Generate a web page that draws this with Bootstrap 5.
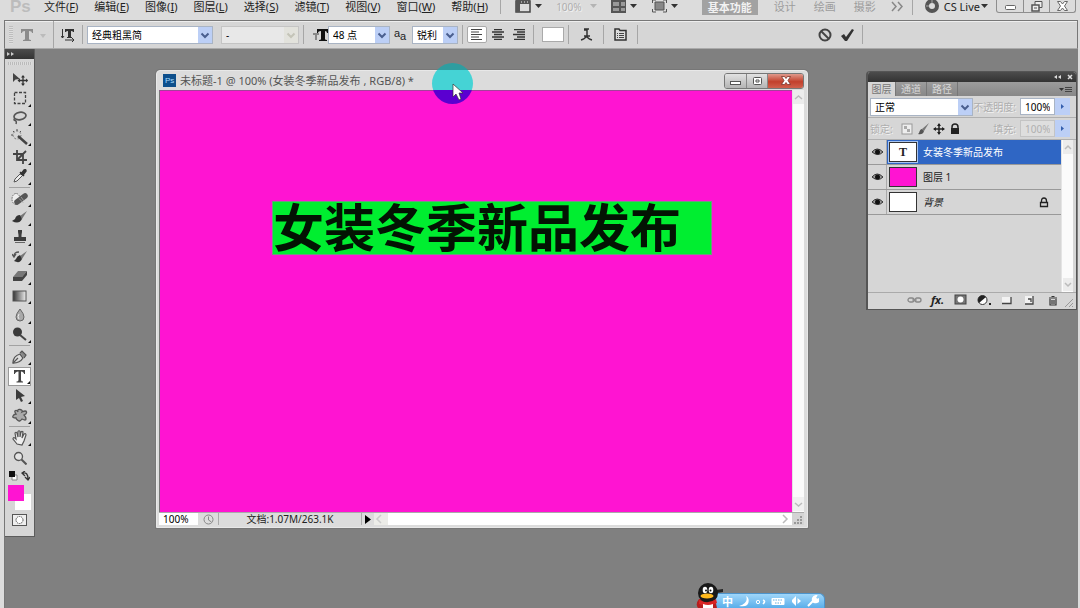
<!DOCTYPE html>
<html lang="zh-CN">
<head>
<meta charset="utf-8">
<meta name="viewport" content="width=device-width, initial-scale=1">
<title>未标题-1</title>
<link href="https://cdn.jsdelivr.net/npm/bootstrap@5.3.0/dist/css/bootstrap.min.css" rel="stylesheet">
<style>
:root{--face:#d6d6d6;--line:#8c8c8c;--ink:#222;--pink:#ff14d2}
html,body{height:100%}
body{font-family:"Noto Sans","Noto Sans CJK SC",sans-serif;font-size:11px;line-height:14px;color:var(--ink);background:#dcdcdc;overflow:hidden}
button{border:0;background:none;padding:0;color:inherit;font:inherit;line-height:inherit;white-space:nowrap}
svg{display:block;flex:none}
select,input{font:inherit;font-size:10px;color:#000;border:1px solid #a9b4c4;border-radius:0;background-color:#fff;padding:0 4px;min-width:0}
select{appearance:none;background-repeat:no-repeat;background-position:right 0 center;background-image:url("data:image/svg+xml,%3Csvg xmlns='http://www.w3.org/2000/svg' width='14' height='16'%3E%3Crect width='14' height='16' fill='%23bccff6'/%3E%3Cpath d='M3.500 6.500l3.500 3.500 3.500-3.500' fill='none' stroke='%234a5f8f' stroke-width='2'/%3E%3C/svg%3E")}
select:disabled{opacity:1;background-color:#e8e8e8;border-color:#c4c4c4;background-image:url("data:image/svg+xml,%3Csvg xmlns='http://www.w3.org/2000/svg' width='14' height='16'%3E%3Crect width='14' height='16' fill='%23e2e2dc'/%3E%3Cpath d='M3.500 6.500l3.500 3.500 3.500-3.500' fill='none' stroke='%23c4c4b8' stroke-width='2'/%3E%3C/svg%3E")}
.menubar{height:20px;padding-left:10px;padding-right:4px}
.app-logo{font:700 17px/14px "Liberation Sans",sans-serif;width:34px;color:#bcbcbc}
.menu-set{gap:16px}
.view-set{gap:14px;margin-left:12px}
.zoom-pick{font-size:10px}
.menubar button{height:14px}
.vline{width:1px;background:#a6a6a6;align-self:stretch;flex:none}
.mode{color:#9d9d9d;width:20px}
.mode-on{background:#a2a2a2;color:#f2f2f2;width:56px;font-weight:700}
.menubar .mode-on{height:15px}
.sysbox{border:1px solid #8e8e8e;border-top:0;border-radius:0 0 3px 3px;height:13px}
.sysbox button{width:26px;height:12px;display:flex;justify-content:center;align-items:center}
.sysbox button+button{border-left:1px solid #8e8e8e}
.optbar{height:29px;margin-left:4px;margin-right:2px;border:1px solid #777;border-bottom-color:#aaa;background:var(--face);box-shadow:inset 0 1px #eee}
.optbar select{height:18px}
.slot{display:flex;align-items:center;justify-content:center;flex:none}
.grip{width:4px;height:18px;background:repeating-linear-gradient(#bdbdbd 0 1px,#dedede 1px 2px)}
.align-on{background:#fff;border:1px solid #aaa;border-radius:2px}
.ink-box{width:22px;height:15px;background:#fff;border:1px solid #aaa}
.desk{background:#808080;margin-left:4px;margin-right:2px;border-left:1px solid #777}
/* tool palette */
.palette{width:30px;height:488px;background:var(--face);border-right:1px solid #5c5c5c;border-bottom:1px solid #5c5c5c}
.dark-head{background:linear-gradient(#4c4c4c,#333);color:#ccc}
.palette .dark-head{height:10px;padding-left:2px}
.hgrip{width:24px;height:3px;margin:3px auto 4px;background:repeating-linear-gradient(90deg,#bbb 0 1px,#ddd 1px 2px)}
.tools{padding:0 3px}
.tools button{height:19px;width:23px;display:flex;align-items:center;justify-content:center;position:relative}
.tools button.fly::after{content:"";position:absolute;right:0;bottom:1px;border-left:3px solid transparent;border-bottom:3px solid #111}
.tools button.tool-on{background:#fff;border:1px solid #999}
.t6{height:117px}.t8{height:155px}.t4{height:78px}.t2{height:39px}
.hline{height:1px;background:#a2a2a2;margin:1px 4px 1px}
.swatches{height:25px;position:relative;margin:0 3px}
.swatches button{position:absolute;width:16px;height:16px}
.fore{background:var(--pink);left:0;top:0;z-index:1}
.back{background:#fff;right:0;bottom:0}
/* document window */
.docwin{left:151px;top:21px;width:652px;height:458px;background:#dcdcdc;border:1px solid #e8e8e8;border-radius:4px 4px 0 0;box-shadow:0 0 0 1px #777;padding:0 3px 2px 2px}
.titlebar{height:19px;color:#555}
.caption-set{border:1px solid #777;border-radius:3px;height:16px;overflow:hidden}
.caption-set button{width:21px;display:flex;align-items:center;justify-content:center;background:linear-gradient(#e2e2e2,#b4b4b4)}
.caption-set button+button{border-left:1px solid #888}
.caption-set .shut{width:36px;background:linear-gradient(#e0998c,#c2402c 55%,#d0604c)}
.canvas-area{background:var(--pink);border-left:1px solid #777;border-top:1px solid #a3419a}
.vscroll{width:12px;background:#fbfbfb;border-left:1px solid #e4e4e4}
.headline{margin:111px 81px 0 113px;background:#00ee30;outline:1px solid #6d9b80;height:52px;font:700 51px/46px "Noto Sans CJK SC",sans-serif;color:#031303;white-space:nowrap}
.status{height:13px;font-size:10px;line-height:13px;border-top:1px solid #aaa}
.status input{width:39px;border:0;height:12px}
.status .doc-size{width:144px;border-left:1px solid #aaa;border-right:1px solid #aaa}
/* layers */
.layers{right:1px;top:22px;width:211px;height:239px;background:var(--face);border:1px solid #555;border-left-width:2px;border-radius:4px 4px 0 0;overflow:hidden}
.layers .dark-head{height:10px;padding-right:3px;gap:5px}
.tabs{height:14px;background:linear-gradient(#9c9c9c,#878787);font-size:10px;line-height:14px}
.tabs button{width:31px;color:#d8d8d8;border-right:1px solid #777}
.tabs .tab-on{background:var(--face);color:#777;width:28px}
.prow{height:22px;border-bottom:1px solid #b0b0b0;padding:0 6px 0 2px;font-size:10px}
.prow input{height:17px;width:35px}
.prow input:disabled{background:#dedede;color:#b0b0b0;border-color:#c4c4c4}
.dim{color:#aeaeae;text-shadow:1px 1px #f2f2f2}
.step{width:15px;height:17px;background:#bccff6;display:flex;align-items:center;justify-content:center}
.layer-list{padding-right:3px}
.layer-row{height:25px;border-bottom:1px solid #999;font-size:10px;padding-right:12px}
.layer-row .eye{width:19px;height:24px;border-right:1px solid #aaa;background:var(--face);display:flex;align-items:center;justify-content:center}
.layer-row.picked{background:#2f66c4;color:#fff}
.thumb{width:28px;height:20px;border:1px solid #333;background:#fff;margin:0 6px 0 2px;color:#222;font:700 12px/18px "Liberation Serif",serif;text-align:center}
.thumb-pink{background:var(--pink)}
.picked .thumb{outline:1px solid #a8c4f0}
.lfoot{height:17px;border-top:1px solid #aaa;padding-right:2px}
.lfoot button{width:23px;height:14px;display:flex;align-items:center;justify-content:center}
/* overlay items */
.halo{left:427px;top:14px;width:41px;height:41px;border-radius:50%;background:linear-gradient(#2f9da0 0 7px,#45d3d5 7px 27px,#5a00d0 27px)}
.pointer{left:447px;top:34px}
.ime{left:691px;bottom:0;height:26px}
.ime-bar{height:15px;width:113px;margin-left:-12px;padding:0 5px 0 9px;border-radius:6px 6px 0 0;background:linear-gradient(#9fd6fa,#5aaeea);border:1px solid #4c94cc;border-bottom:0;color:#fff}
.ime-bar button{height:13px;line-height:13px;font-weight:700}
</style>
</head>
<body class="d-flex flex-column">
<header class="flex-shrink-0">
 <nav class="menubar d-flex align-items-start">
  <span class="app-logo">Ps</span>
  <div class="menu-set d-flex">
   <button>文件(<u>F</u>)</button><button>编辑(<u>E</u>)</button><button>图像(<u>I</u>)</button><button>图层(<u>L</u>)</button><button>选择(<u>S</u>)</button><button>滤镜(<u>T</u>)</button><button>视图(<u>V</u>)</button><button>窗口(<u>W</u>)</button><button>帮助(<u>H</u>)</button>
  </div>
  <div class="view-set d-flex">
   <span class="vline"></span>
   <button class="slot" aria-label="Bridge"><svg width="27" height="14"><path d="M1 1h14v11H1z" fill="#ddd" stroke="#444" stroke-width="1.500"/><path d="M1 0h14v4H1zM1 4h4v8H1z" fill="#555"/><path d="M6 2h1M9 2h1M12 2h1" stroke="#eee"/><path d="M20 4h7l-3.500 4z" fill="#333"/></svg></button>
   <button class="slot dim zoom-pick" disabled>100% <svg class="ms-2" width="7" height="14"><path d="M0 4h7l-3.500 4z" fill="#b4b4b4"/></svg></button>
   <button class="slot" aria-label="排列文档"><svg width="27" height="14"><path d="M0 0h15v13H0z" fill="#555"/><path d="M2 2h6v4H2zM2 8h6v3H2zM10 2h4v4h-4zM10 8h4v3h-4z" fill="#999"/><path d="M19 4h7l-3.500 4z" fill="#333"/></svg></button>
   <button class="slot" aria-label="屏幕模式"><svg width="27" height="14"><path d="M3 2h9v8H3z" fill="#888" stroke="#555"/><path d="M.5 3V0H4M11 0h3.500v3M.5 9v3H4M11 12h3.500V9" fill="none" stroke="#555"/><path d="M19 4h7l-3.500 4z" fill="#333"/></svg></button>
  </div>
  <div class="d-flex ms-auto align-items-start">
   <button class="mode-on">基本功能</button>
   <button class="mode ms-3">设计</button><button class="mode ms-3 px-1">绘画</button><button class="mode ms-4">摄影</button>
   <button class="ms-3" aria-label="更多"><svg width="14" height="14"><path d="M2 2l4 4.500L2 11M8 2l4 4.500L8 11" fill="none" stroke="#888" stroke-width="1.500"/></svg></button>
   <span class="vline ms-2 me-2"></span>
   <button class="d-flex ms-1" ><svg class="me-1" width="15" height="14"><circle cx="7" cy="6" r="5" fill="none" stroke="#555" stroke-width="4"/><path d="M7 0v3M1 6h3" stroke="#aaa"/></svg>CS Live<svg width="8" height="14"><path d="M1 4h7l-3.500 4z" fill="#333"/></svg></button>
   <div class="sysbox d-flex ms-2">
    <button aria-label="最小化"><svg width="11" height="8"><rect x=".5" y="3.500" width="10" height="4" rx="1" fill="#fff" stroke="#666"/></svg></button>
    <button aria-label="还原"><svg width="12" height="11"><path d="M4 .5h7v6H4z" fill="#eee" stroke="#555"/><path d="M1 4h7v6H1z" fill="#eee" stroke="#555" stroke-width="1.500"/><path d="M3 7h3" stroke="#555"/></svg></button>
    <button aria-label="关闭"><svg width="11" height="10"><path d="M.5 .5h3l2 2.500 2-2.500h3L7.500 5l3 4.500h-3l-2-2.500-2 2.500h-3l3-4.500z" fill="#fff" stroke="#666"/></svg></button>
   </div>
  </div>
 </nav>
 <div class="optbar d-flex align-items-center">
  <span class="grip ms-1"></span>
  <button class="slot" style="width:40px" aria-label="文字工具预设"><svg width="28" height="16"><path d="M2 2h12v4h-1q0-2-3-2v8q0 1 2 1v1H4v-1q2 0 2-1V4Q3 4 3 6H2z" fill="#8b8b8b"/><path d="M21 7h6l-3 4z" fill="#bbb"/></svg></button>
  <span class="vline"></span>
  <button class="slot" style="width:28px" aria-label="切换文本方向"><svg width="14" height="14"><path d="M4 1h9v3h-1q0-1-2-1v6h1v1H6V9h1V3Q5 3 5 4H4z" fill="#333"/><path d="M1.500 1v9M0 8l1.500 2L3 8M4 12h9M11 10l2 2-2 2" fill="none" stroke="#333"/></svg></button>
  <span class="vline my-1"></span>
  <select class="ms-1" style="width:126px" aria-label="字体"><option>经典粗黑简</option></select>
  <select class="ms-2" style="width:78px" aria-label="字体样式" disabled><option>-</option></select>
  <span class="vline my-1 ms-1"></span>
  <span class="slot ms-2" style="width:16px"><svg width="15" height="14"><path d="M4 1h11v4h-1q0-2-2-2v8q0 1 2 1v1H6v-1q2 0 2-1V3Q5 3 5 5H4z" fill="#111"/><path d="M0 5h6v2H4v5H2V7H0z" fill="#888"/></svg></span>
  <select style="width:62px" aria-label="字体大小"><option>48 点</option></select>
  <span class="slot" style="width:22px"><svg width="14" height="18"><text x="0" y="11" font-family="Liberation Sans" font-size="11" fill="#222">a</text><text x="6" y="14" font-family="Liberation Sans" font-size="11" fill="#222">a</text></svg></span>
  <select style="width:46px" aria-label="消除锯齿"><option>锐利</option></select>
  <span class="vline my-1 ms-1"></span>
  <button class="slot align-on ms-1" style="width:20px;height:17px" aria-label="左对齐"><svg width="12" height="11"><path d="M0 .5h11M0 3h8M0 5.500h11M0 8h8M0 10.500h11" stroke="#444"/></svg></button>
  <button class="slot" style="width:21px" aria-label="居中"><svg width="12" height="11"><path d="M2 .5h8M0 3h12M2 5.500h8M0 8h12M2 10.500h8" stroke="#333" stroke-width="1.500"/></svg></button>
  <button class="slot" style="width:21px" aria-label="右对齐"><svg width="12" height="11"><path d="M1 .5h11M4 3h8M0 5.500h12M4 8h8M1 10.500h11" stroke="#333" stroke-width="1.500"/></svg></button>
  <span class="vline my-1 ms-1 me-1"></span>
  <button class="ink-box ms-1 me-1" aria-label="文本颜色"></button>
  <span class="vline my-1"></span>
  <button class="slot" style="width:34px" aria-label="变形文字"><svg width="13" height="13"><path d="M4 2h3v6M4 8h6M6.500 8Q5 11 1 12M6.500 8Q8 11 12 12M4 1h5" fill="none" stroke="#333" stroke-width="1.500"/></svg></button>
  <span class="vline my-1"></span>
  <button class="slot" style="width:33px" aria-label="字符面板"><svg width="13" height="13"><path d="M1 3V1h4l1 1.500h6V12H1z" fill="#ddd" stroke="#333" stroke-width="1.500"/><path d="M3 5.500h1M3 7.500h1M3 9.500h1M5 5.500h5M5 7.500h5M5 9.500h5" stroke="#444"/></svg></button>
  <span class="vline my-1"></span>
  <div class="ms-auto d-flex align-items-center align-self-stretch" style="padding-right:214px">
   <button class="me-2" aria-label="取消"><svg width="14" height="14"><circle cx="7" cy="7" r="5.500" fill="none" stroke="#444" stroke-width="2"/><path d="M3 3l8 8" stroke="#444" stroke-width="2"/></svg></button>
   <button class="me-2" aria-label="提交"><svg width="14" height="14"><path d="M1 8l3-2 2 3 6-8 2 1-7 11H5z" fill="#333"/></svg></button>
   <span class="vline my-1"></span>
  </div>
 </div>
</header>
<main class="desk flex-fill position-relative overflow-hidden">
 <aside class="palette">
  <div class="dark-head d-flex align-items-center"><svg width="8" height="6"><path d="M0 1l3 2-3 2zM4 1l3 2-3 2z" fill="#ccc"/></svg></div>
  <div class="hgrip"></div>
  <div class="tools t6 d-flex flex-column justify-content-between">
   <button aria-label="移动"><svg width="16" height="14"><path d="M1 1v9l2.500-2.500L8 7z" fill="#444"/><path d="M11 4v9M6.500 8.500h9" stroke="#333" stroke-width="1.300"/><path d="M9 5.500L11 3l2 2.500zM9 11.500l2 2.500 2-2.500zM8 6.500L5.500 8.500 8 10.500zM14 6.500l2 2-2 2z" fill="#333"/></svg></button>
   <button class="fly" aria-label="选框"><svg width="14" height="14"><rect x="1.500" y="1.500" width="11" height="11" fill="none" stroke="#444" stroke-width="1.300" stroke-dasharray="3 1.500"/></svg></button>
   <button class="fly" aria-label="套索"><svg width="15" height="14"><ellipse cx="8" cy="5" rx="6" ry="3.700" transform="rotate(-10 8 5)" fill="none" stroke="#555" stroke-width="1.700"/><path d="M3 7q-2 2 0 2.500t1 3.500" fill="none" stroke="#555" stroke-width="1.500"/></svg></button>
   <button class="fly" aria-label="魔棒"><svg width="17" height="17"><circle cx="6" cy="6" r="4" fill="none" stroke="#777" stroke-dasharray="2 1.500"/><path d="M6 0v2M0 6h2M2 2l1 1M10 2l-1 1" stroke="#555"/><path d="M7 7l9 8" stroke="#444" stroke-width="2.500"/></svg></button>
   <button class="fly" aria-label="裁剪"><svg width="14" height="14"><path d="M4 0v10h10M0 4h10v10M4 10l9-9" fill="none" stroke="#444" stroke-width="1.800"/></svg></button>
   <button class="fly" aria-label="吸管"><svg width="14" height="14"><path d="M1 13l1-3 6-6 2 2-6 6z" fill="#eee" stroke="#555"/><path d="M7 3l4 4M8 5l3-4q2-1 2 1L10 6z" fill="#333" stroke="#333" stroke-width="1.500"/></svg></button>
  </div>
  <div class="hline"></div>
  <div class="tools t8 d-flex flex-column justify-content-between">
   <button class="fly" aria-label="修复"><svg width="18" height="14"><ellipse cx="5" cy="7" rx="4" ry="5.500" fill="#eee" stroke="#666" stroke-dasharray="1.500 1"/><path d="M6 10l8-6" stroke="#555" stroke-width="5.500" stroke-linecap="round"/><path d="M8 6.500l4 4M10 5l3 4" stroke="#999"/></svg></button>
   <button class="fly" aria-label="画笔"><svg width="16" height="13"><path d="M15 0L8 5l2 3z" fill="#777"/><path d="M8 4q-4 0-5 4l-3 2q7 4 10-2z" fill="#333"/></svg></button>
   <button class="fly" aria-label="图章"><svg width="14" height="14"><path d="M5 0h4v2L8.500 5v2H13v4H1V7h4.500V5L5 2z" fill="#3c3c3c"/><path d="M2 12.500h10" stroke="#666"/></svg></button>
   <button class="fly" aria-label="历史画笔"><svg width="16" height="14"><path d="M15 1L8 6l2 3z" fill="#777"/><path d="M8 5q-3 1-4 4l-2 2q6 3 8-2z" fill="#333"/><path d="M2 6q0-4 5-4M0 4l2 3 2-3" fill="none" stroke="#555" stroke-width="1.300"/></svg></button>
   <button class="fly" aria-label="橡皮"><svg width="16" height="12"><path d="M6 1h9L10 7H1z" fill="#777"/><path d="M1 7h9v4H1zM10 7l5-6v4l-5 6z" fill="#444"/></svg></button>
   <button class="fly" aria-label="渐变"><svg width="16" height="12"><defs><linearGradient id="grad"><stop stop-color="#333"/><stop offset="1" stop-color="#eee"/></linearGradient></defs><rect x="1" y="1" width="13" height="10" fill="url(#grad)" stroke="#555"/></svg></button>
   <button class="fly" aria-label="模糊"><svg width="12" height="14"><path d="M6 1Q2 6 2 9a4 4 0 0 0 8 0Q10 6 6 1z" fill="#a9a9a9" stroke="#666"/><path d="M5 6q-2 3 0 5" stroke="#eee" fill="none"/></svg></button>
   <button class="fly" aria-label="减淡"><svg width="15" height="14"><circle cx="5.500" cy="5" r="4.500" fill="#3a3a3a"/><path d="M8 8l6 5" stroke="#444" stroke-width="2"/></svg></button>
  </div>
  <div class="hline"></div>
  <div class="tools t4 d-flex flex-column justify-content-between">
   <button class="fly" aria-label="钢笔"><svg width="15" height="14"><path d="M1 13q0-7 7-9l3 4q-3 5-10 5z" fill="#ddd" stroke="#555" stroke-width="1.300"/><path d="M1 13l5-5M8 3l2-2 4 4-2 3" stroke="#555" fill="#888" stroke-width="1.200"/></svg></button>
   <button class="fly tool-on" aria-label="文字"><svg width="13" height="14"><path d="M1 1h11v4h-1q0-2-3-2.500V11q0 1.500 2 1.500v1H3.500v-1q2 0 2-1.500V2.500Q2 3 2 5H1z" fill="#444"/></svg></button>
   <button class="fly" aria-label="路径选择"><svg width="12" height="14"><path d="M2 0v11l3-2 2 4 2-1-2-4 4-1z" fill="#3c3c3c"/></svg></button>
   <button class="fly" aria-label="形状"><svg width="16" height="14"><path d="M6 4Q5 1 8 1.500T10 4q4-2 4.500 0T12 7q2 2 2 4t-4 0q-2 3-4 1.500T4 10q-4 0-3-2t3-2Q2 3 3.500 2.500T6 4z" fill="#aaa" stroke="#555" stroke-width="1.300"/></svg></button>
  </div>
  <div class="hline"></div>
  <div class="tools t2 d-flex flex-column justify-content-between">
   <button class="fly" aria-label="抓手"><svg width="16" height="16"><path d="M5 14L1 9q0-2 2-1l1 1-1-6q1-1.500 2 0l1 4V1.500q1-1.500 2 0V7l1-5q1-1 2 0l-1 6 2-4q2-1 2 1l-2 6-2 4z" fill="#eee" stroke="#555" stroke-width="1.200"/></svg></button>
   <button aria-label="缩放"><svg width="14" height="14"><circle cx="5.500" cy="5.500" r="4" fill="#e4e4e4" stroke="#555" stroke-width="1.300"/><path d="M8.500 8.500l5 5" stroke="#555" stroke-width="2"/></svg></button>
  </div>
  <div class="d-flex justify-content-between px-1 pt-1 pb-1">
   <button aria-label="默认颜色"><svg width="9" height="10"><path d="M3 4h5v5H3z" fill="#fff" stroke="#888"/><path d="M0 0h6v6H0z" fill="#111"/></svg></button>
   <button aria-label="切换颜色"><svg width="9" height="10"><path d="M2 2q5-1 5 6M4 0L1 2l3 3M4 6l3 3 2-3" fill="none" stroke="#333" stroke-width="1.300"/></svg></button>
  </div>
  <div class="swatches"><button class="fore" aria-label="前景色"></button><button class="back" aria-label="背景色"></button></div>
  <div class="d-flex justify-content-center pt-1"><button aria-label="快速蒙版"><svg width="15" height="13"><rect x=".5" y=".5" width="14" height="11" fill="#eee" stroke="#555"/><circle cx="7.500" cy="6" r="3.500" fill="#fff" stroke="#555" stroke-dasharray="1.500 .7"/></svg></button></div>
 </aside>

 <section class="docwin position-absolute d-flex flex-column">
  <div class="titlebar d-flex align-items-center flex-shrink-0">
   <svg class="ms-1 me-1" width="13" height="13"><rect width="13" height="13" fill="#0d4f8c"/><text x="2" y="9" font-family="Liberation Sans" font-size="8" fill="#a8dcff">Ps</text></svg>
   <span class="text-nowrap">未标题-1 @ 100% (女装冬季新品发布 , RGB/8) *</span>
   <div class="caption-set d-flex ms-auto">
    <button aria-label="最小化"><svg width="11" height="10"><rect x=".5" y="5.500" width="10" height="3" fill="#fff" stroke="#555"/></svg></button>
    <button aria-label="最大化"><svg width="11" height="10"><rect x="1.500" y="1.500" width="8" height="7" rx="1" fill="#fff" stroke="#555"/><path d="M4 4h3v2H4z" fill="#fff" stroke="#555"/></svg></button>
    <button class="shut" aria-label="关闭"><svg width="10" height="9"><path d="M.5 .5h3l1.500 2 1.500-2h3L7 4.500l2.500 4h-3L5 6.500l-1.500 2h-3L3 4.500z" fill="#fff" stroke="#7a3328" stroke-width=".8"/></svg></button>
   </div>
  </div>
  <div class="d-flex flex-fill">
   <div class="canvas-area flex-fill"><div class="headline">女装冬季新品发布</div></div>
   <div class="vscroll d-flex flex-column justify-content-between align-items-center">
    <svg width="11" height="15"><path d="M0 0h11v14H0z" fill="#ececec"/><path d="M2 9l3.500-3L9 9" fill="none" stroke="#bbb" stroke-width="1.500"/></svg>
    <svg width="11" height="15"><path d="M0 0h11v14H0z" fill="#f0f0f0"/><path d="M2 6l3.500 3L9 6" fill="none" stroke="#bbb" stroke-width="1.500"/></svg>
   </div>
  </div>
  <div class="status d-flex flex-shrink-0">
   <input aria-label="缩放比例" value="100%">
   <button class="slot" style="width:20px" aria-label="信息"><svg width="11" height="11"><circle cx="5.500" cy="5.500" r="4.500" fill="#ddd" stroke="#888"/><path d="M5.500 2.500v3.500l3 2" fill="none" stroke="#888"/></svg></button>
   <span class="doc-size text-center text-nowrap">文档:1.07M/263.1K</span>
   <button class="slot" style="width:12px" aria-label="状态选项"><svg width="6" height="9"><path d="M0 0v9l6-4.500z" fill="#000"/></svg></button>
   <div class="flex-fill bg-white d-flex justify-content-between">
    <svg width="14" height="12"><path d="M0 0h14v12H0z" fill="#ecece8"/><path d="M7 2L3 6l4 4" fill="none" stroke="#ccc" stroke-width="1.500"/></svg>
    <svg width="14" height="12"><path d="M5 2l4 4-4 4" fill="none" stroke="#bbb" stroke-width="1.500"/></svg>
   </div>
   <svg width="12" height="12"><path d="M0 0h12v12H0z" fill="#d4d4d4"/><path d="M2 10h9M5 7h6M8 4h3" stroke="#999" stroke-width="2" stroke-dasharray="2 1"/></svg>
  </div>
 </section>

 <aside class="layers position-absolute d-flex flex-column">
  <div class="dark-head d-flex align-items-center justify-content-end flex-shrink-0"><svg width="8" height="6"><path d="M3 1L0 3l3 2zM7 1L4 3l3 2z" fill="#ddd"/></svg><svg width="6" height="6"><path d="M1 1l4 4M5 1L1 5" stroke="#ddd" stroke-width="1.500"/></svg></div>
  <div class="tabs d-flex flex-shrink-0"><button class="tab-on">图层</button><button>通道</button><button>路径</button><button class="ms-auto border-0 d-flex justify-content-end pe-1" aria-label="面板菜单"><svg width="13" height="14"><path d="M0 6h5l-2.500 3z" fill="#333"/><path d="M6 5.500h7M6 7.500h7M6 9.500h7" stroke="#444"/></svg></button></div>
  <div class="prow d-flex align-items-center flex-shrink-0"><select style="width:103px;height:18px" aria-label="混合模式"><option>正常</option></select><label class="dim ms-auto me-1 text-nowrap" for="opac">不透明度:</label><input id="opac" value="100%"><button class="step" aria-label="不透明度滑块"><svg width="5" height="7"><path d="M1 1l3 2.500L1 6z" fill="#345fae"/></svg></button></div>
  <div class="prow d-flex align-items-center flex-shrink-0"><span class="dim me-2">锁定:</span>
   <button class="me-1" aria-label="锁定透明像素"><svg width="12" height="12"><rect x="1" y="1" width="10" height="10" fill="#eee" stroke="#999"/><path d="M3 3h3v3H3zM6 6h3v3H6z" fill="#aaa"/></svg></button>
   <button class="me-1" aria-label="锁定图像像素"><svg width="12" height="12"><path d="M12 0L5 6l2 2z" fill="#777"/><path d="M5 6q-2 0-3 4l-1 1q5 1 6-3z" fill="#555"/></svg></button>
   <button class="me-1" aria-label="锁定位置"><svg width="12" height="12"><path d="M6 1v10M1 6h10" stroke="#222" stroke-width="1.500"/><path d="M4 3l2-3 2 3zM4 9l2 3 2-3zM3 4L0 6l3 2zM9 4l3 2-3 2z" fill="#222"/></svg></button>
   <button aria-label="锁定全部"><svg width="12" height="12"><path d="M3 6V4q0-3 3-3t3 3v2" fill="none" stroke="#222" stroke-width="1.500"/><path d="M2 5h8v6H2z" fill="#222"/></svg></button>
   <label class="dim ms-auto me-1" for="fillv">填充:</label><input id="fillv" value="100%" disabled><button class="step" aria-label="填充滑块"><svg width="5" height="7"><path d="M1 1l3 2.500L1 6z" fill="#345fae"/></svg></button></div>
  <div class="layer-list d-flex flex-fill">
   <div class="flex-fill">
    <div class="layer-row picked d-flex align-items-center"><button class="eye" aria-label="可见"><svg width="13" height="10"><path d="M1 5q5-6 11 0-5 5-11 0z" fill="#999" stroke="#333"/><circle cx="6.500" cy="5" r="2.500" fill="#111"/></svg></button><span class="thumb">T</span><span>女装冬季新品发布</span></div>
    <div class="layer-row d-flex align-items-center"><button class="eye" aria-label="可见"><svg width="13" height="10"><path d="M1 5q5-6 11 0-5 5-11 0z" fill="#999" stroke="#333"/><circle cx="6.500" cy="5" r="2.500" fill="#111"/></svg></button><span class="thumb thumb-pink"></span><span>图层 1</span></div>
    <div class="layer-row d-flex align-items-center"><button class="eye" aria-label="可见"><svg width="13" height="10"><path d="M1 5q5-6 11 0-5 5-11 0z" fill="#999" stroke="#333"/><circle cx="6.500" cy="5" r="2.500" fill="#111"/></svg></button><span class="thumb"></span><em>背景</em><svg class="ms-auto" width="10" height="11"><path d="M1.500 5.500h7v4h-7zM2.500 5V4q0-3 2.500-3t2.500 3v1" fill="none" stroke="#222" stroke-width="1.300"/></svg></div>
   </div>
   <div class="vscroll d-flex flex-column justify-content-between align-items-center">
    <svg width="10" height="15"><path d="M0 0h10v14H0z" fill="#ececec"/><path d="M2 9l3-3 3 3" fill="none" stroke="#bbb" stroke-width="1.500"/></svg>
    <svg width="10" height="14"><path d="M0 0h10v13H0z" fill="#ececec"/><path d="M2 5l3 3 3-3" fill="none" stroke="#bbb" stroke-width="1.500"/></svg>
   </div>
  </div>
  <div class="lfoot d-flex justify-content-end flex-shrink-0">
   <button aria-label="链接"><svg width="15" height="8"><rect x="1" y="2" width="6" height="4" rx="2" fill="none" stroke="#888" stroke-width="1.300"/><rect x="8" y="2" width="6" height="4" rx="2" fill="none" stroke="#888" stroke-width="1.300"/><path d="M5 4h5" stroke="#888"/></svg></button>
   <button aria-label="样式" class="fst-italic fw-bold">fx.</button>
   <button aria-label="蒙版"><svg width="13" height="12"><rect x="1" y="1" width="11" height="9" fill="#777" stroke="#444"/><circle cx="6.500" cy="5.500" r="3" fill="#fff"/></svg></button>
   <button aria-label="调整"><svg width="14" height="12"><circle cx="5.500" cy="6" r="4.500" fill="#fff" stroke="#333"/><path d="M2 9A4.500 4.500 0 0 1 9 3z" fill="#222"/><path d="M12 10h2" stroke="#222" stroke-width="2"/></svg></button>
   <button aria-label="组"><svg width="11" height="10"><path d="M1 2h9v6H1z" fill="#f2f2f2"/><path d="M1 8.500h9V2" fill="none" stroke="#444" stroke-width="1.300"/></svg></button>
   <button aria-label="新建"><svg width="11" height="10"><path d="M1 1h8v8H1z" fill="#f2f2f2"/><path d="M1 9h8V1M4 4h3v3" fill="none" stroke="#444" stroke-width="1.300"/></svg></button>
   <button aria-label="删除"><svg width="10" height="11"><path d="M1 3h8M3.500 1.500h3M2 4v6h6V4M4 5v4M6 5v4" fill="none" stroke="#333" stroke-width="1.200"/></svg></button>
   <svg class="mt-1" width="10" height="11"><path d="M1 10L9 2M5 10l4-4M8 10l1-1" stroke="#999"/></svg>
  </div>
 </aside>

 <div class="halo position-absolute"></div>
 <svg class="pointer position-absolute" width="12" height="19"><path d="M1 1v13l3-3 3 6 2-1-2-6h4z" fill="#fff" stroke="#333" stroke-width=".7"/></svg>

 <div class="ime position-absolute d-flex align-items-end">
  <svg width="28" height="26" class="position-relative z-1"><path d="M3 17q-4 5-1 9h19l-2-9z" fill="#b51d1d"/><path d="M20 8l7-1v3l-6 1z" fill="#222"/><ellipse cx="12" cy="11" rx="10" ry="10" fill="#181818"/><ellipse cx="9" cy="8" rx="2.300" ry="3.200" fill="#fff"/><ellipse cx="15" cy="8" rx="2.300" ry="3.200" fill="#fff"/><circle cx="10" cy="8.500" r="1" fill="#111"/><circle cx="14.500" cy="8.500" r="1" fill="#111"/><ellipse cx="11" cy="14" rx="6.500" ry="2.400" fill="#ffb81c"/><path d="M3 18q9 5 17-1l1 4q-9 5-18 1z" fill="#d92424"/><path d="M7 22q5 2 10 0v4H7z" fill="#fff"/></svg>
  <div class="ime-bar d-flex justify-content-between align-items-center">
   <button>中</button>
   <button aria-label="半角"><svg width="11" height="12"><path d="M8 1q3 7-7 10 11 2 9.500-7Q10 2 8 1z" fill="#fff"/></svg></button>
   <button aria-label="标点"><svg width="11" height="12"><circle cx="3" cy="7" r="1.700" fill="none" stroke="#fff"/><path d="M8 5q3 1 0 4" stroke="#fff" stroke-width="1.700" fill="none"/></svg></button>
   <button aria-label="软键盘"><svg width="14" height="12"><rect x=".5" y="3" width="13" height="7" rx="1" fill="#fff"/><path d="M2 5h10M4 8h6" stroke="#62aee0" stroke-dasharray="1.500 1"/></svg></button>
   <button aria-label="切换"><svg width="11" height="12"><path d="M5 1v10L1 7V5zM6.500 3v6L10 6z" fill="#fff"/></svg></button>
   <button aria-label="设置"><svg width="12" height="12"><path d="M1 11l5-5M6 6q-1-4 3-5L8 3l2 2 2-1q0 4-5 3z" fill="#fff" stroke="#fff" stroke-width="2"/></svg></button>
  </div>
 </div>
</main>
<script src="https://cdn.jsdelivr.net/npm/bootstrap@5.3.0/dist/js/bootstrap.bundle.min.js"></script>
</body>
</html>
